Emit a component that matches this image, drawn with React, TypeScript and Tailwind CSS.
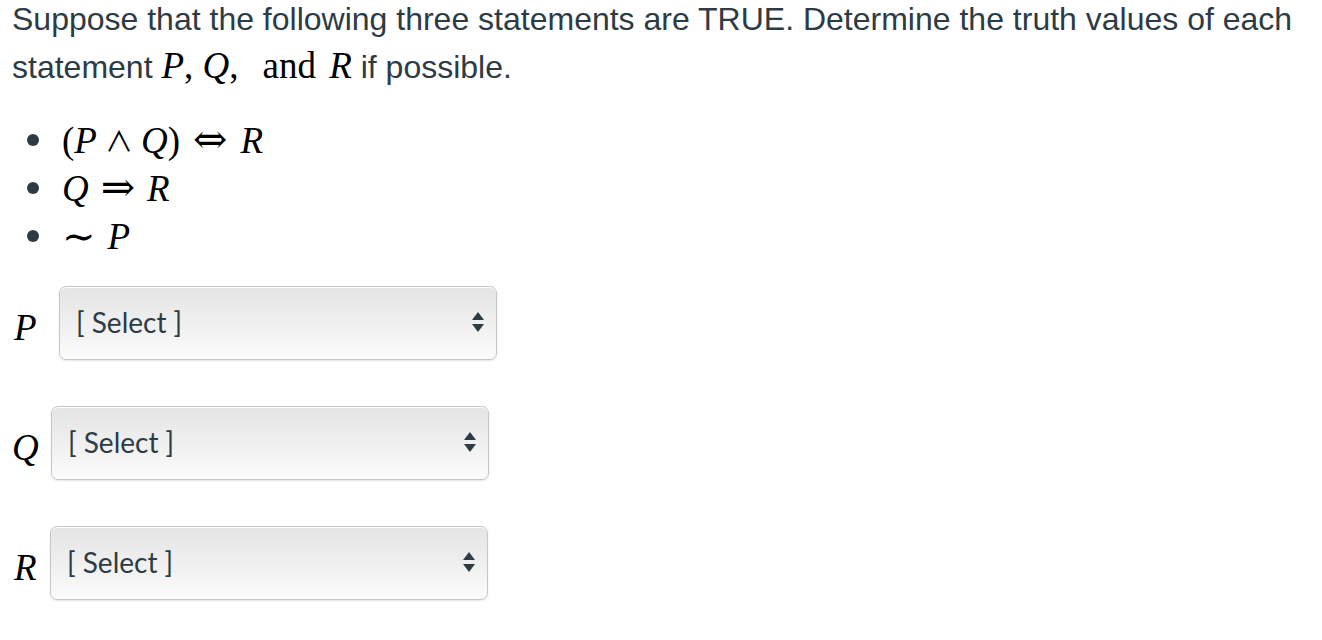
import React from 'react';

const mathFont = { fontFamily: '"Liberation Serif", "DejaVu Serif", serif' };
const arrowFont = { fontFamily: '"DejaVu Serif", "Liberation Serif", serif' };
const wedgeFont = { fontFamily: '"Noto Sans CJK SC", "DejaVu Sans", sans-serif' };

function V({ children }: { children: React.ReactNode }) {
  return <i className="italic">{children}</i>;
}

function Op({
  children,
  className = '',
  font = arrowFont,
}: {
  children: React.ReactNode;
  className?: string;
  font?: React.CSSProperties;
}) {
  return (
    <span className={`inline-block not-italic leading-none ${className}`} style={font}>
      {children}
    </span>
  );
}

function Bullet({ children }: { children: React.ReactNode }) {
  return (
    <li className="flex h-[48px] items-center">
      <span className="ml-[15px] mr-[23px] h-[12px] w-[12px] rounded-full bg-[#2d3b45]" />
      <span className="flex items-center text-[37px] leading-none text-black" style={mathFont}>
        {children}
      </span>
    </li>
  );
}

function SelectBox() {
  return (
    <div
      className="relative flex h-[74px] w-[438px] items-center rounded-[7px] border border-[#c3c8cc] bg-gradient-to-b from-[#e4e4e4] to-[#fbfbfb] pl-[16px] text-[28px] text-[#2d3b45] shadow-[inset_0_1px_0_#fff,0_1px_2px_rgba(0,0,0,0.1)]"
      style={{ fontFamily: 'Lato, "Noto Sans", sans-serif' }}
    >
      <span className="-mt-[3px]">[ Select ]</span>
      <svg className="absolute right-[12px] top-[25px]" width="12" height="20" viewBox="0 0 12 20">
        <path d="M6 0 L12 8 L0 8 Z" fill="#2d3b45" />
        <path d="M0 12 L12 12 L6 20 Z" fill="#2d3b45" />
      </svg>
    </div>
  );
}

export default function App() {
  return (
    <div
      className="min-h-[640px] w-[1322px] bg-white pl-[12px] text-[#2d3b45]"
      style={{ fontFamily: '"Liberation Sans", Arial, sans-serif' }}
    >
      <p className="-mt-[5px] text-[32px] leading-[48px]">
        Suppose that the following three statements are TRUE. Determine the truth values of each
        statement{' '}
        <span className="text-[37px] leading-none text-black" style={mathFont}>
          <V>P</V>, <V>Q</V>,<span className="ml-[24px] mr-[4px]">and</span> <V>R</V>
        </span>{' '}
        if possible.
      </p>

      <ul className="mt-[25px]">
        <Bullet>
          (<V>P</V>
          <Op className="mx-[8px] text-[28px]" font={wedgeFont}>
            ∧
          </Op>
          <V>Q</V>)
          <Op className="mx-[13px] -mt-[2px] text-[41px]">⇔</Op>
          <V>R</V>
        </Bullet>
        <Bullet>
          <V>Q</V>
          <Op className="mx-[12px] -mt-[2px] text-[41px]">⇒</Op>
          <V>R</V>
        </Bullet>
        <Bullet>
          <Op className="mr-[12px] text-[40px]">∼</Op>
          <V>P</V>
        </Bullet>
      </ul>

      <div className="mt-[26px] flex flex-col gap-[46px]">
        <div className="flex items-center">
          <span className="mt-[10px] w-[47px] pl-[2px] text-[37px] text-black" style={mathFont}>
            <V>P</V>
          </span>
          <SelectBox />
        </div>
        <div className="flex items-center">
          <span className="mt-[10px] w-[39px] text-[37px] text-black" style={mathFont}>
            <V>Q</V>
          </span>
          <SelectBox />
        </div>
        <div className="flex items-center">
          <span className="mt-[10px] w-[38px] pl-[2px] text-[37px] text-black" style={mathFont}>
            <V>R</V>
          </span>
          <SelectBox />
        </div>
      </div>
    </div>
  );
}
